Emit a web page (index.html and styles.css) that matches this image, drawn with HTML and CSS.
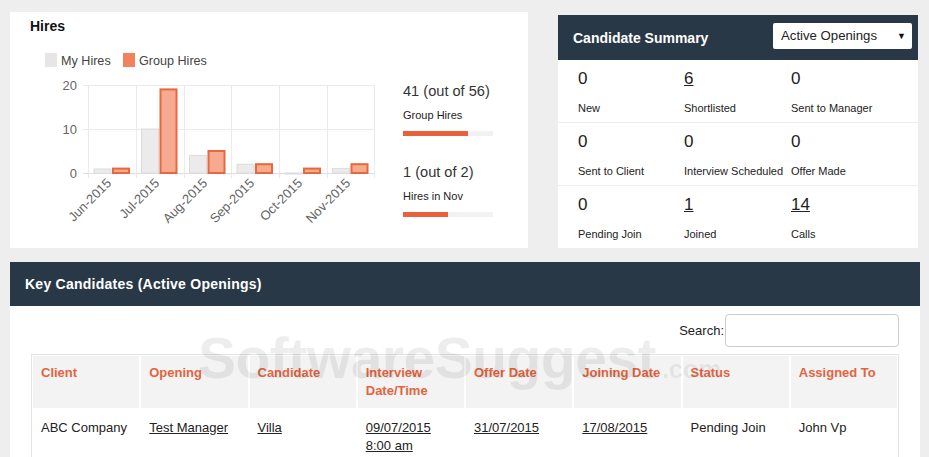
FILE: index.html
```html
<!DOCTYPE html>
<html lang="en">
<head>
<meta charset="utf-8">
<title>Dashboard</title>
<link rel="stylesheet" href="styles.css">
</head>
<body>
<div class="page">
  <div class="top">
    <section class="card hires">
      <h2 class="card-title">Hires</h2>
      <div class="hires-body">
        <svg class="chart" width="360" height="200" viewBox="0 0 360 200" xmlns="http://www.w3.org/2000/svg">
          <!-- legend -->
          <rect x="15" y="9" width="12" height="14" fill="#e6e6e6"/>
          <text x="31" y="21" class="legend">My Hires</text>
          <rect x="93" y="9" width="12" height="14" fill="#f3825c"/>
          <text x="109" y="21" class="legend">Group Hires</text>
          <!-- grid -->
          <g stroke="#ebebeb" stroke-width="1">
            <line x1="53" y1="41.5" x2="345" y2="41.5"/>
            <line x1="53" y1="85.5" x2="345" y2="85.5"/>
            <line x1="58.5" y1="41" x2="58.5" y2="134"/>
            <line x1="106.5" y1="41" x2="106.5" y2="134"/>
            <line x1="154.5" y1="41" x2="154.5" y2="134"/>
            <line x1="201.5" y1="41" x2="201.5" y2="134"/>
            <line x1="249.5" y1="41" x2="249.5" y2="134"/>
            <line x1="297.5" y1="41" x2="297.5" y2="134"/>
            <line x1="344.5" y1="41" x2="344.5" y2="134"/>
          </g>
          <line x1="53" y1="129.5" x2="345" y2="129.5" stroke="#dedede" stroke-width="1"/>
          <!-- y labels -->
          <g class="axis" text-anchor="end">
            <text x="47" y="46">20</text>
            <text x="47" y="90">10</text>
            <text x="47" y="134">0</text>
          </g>
          <!-- bars: my hires -->
          <g fill="#ebebeb" stroke="#dcdcdc" stroke-width="1">
            <rect x="64" y="125" width="17" height="4.4"/>
            <rect x="111.5" y="85" width="17" height="44"/>
            <rect x="159.5" y="111.4" width="17" height="17.6"/>
            <rect x="207" y="120.2" width="17" height="8.8"/>
            <rect x="255" y="129" width="17" height="1"/>
            <rect x="302.5" y="124.6" width="17" height="4.4"/>
          </g>
          <!-- bars: group hires -->
          <g fill="#f6ab90" stroke="#e8673f" stroke-width="2">
            <rect x="83" y="124.6" width="16" height="4.4"/>
            <rect x="130.5" y="45.4" width="16" height="83.6"/>
            <rect x="178.5" y="107" width="16" height="22"/>
            <rect x="226" y="120.2" width="16" height="8.8"/>
            <rect x="274" y="124.6" width="16" height="4.4"/>
            <rect x="321.5" y="120.2" width="16" height="8.8"/>
          </g>
          <!-- x labels -->
          <g class="axis" text-anchor="end">
            <text x="82" y="140" transform="rotate(-45 82 140)">Jun-2015</text>
            <text x="130" y="140" transform="rotate(-45 130 140)">Jul-2015</text>
            <text x="178" y="140" transform="rotate(-45 178 140)">Aug-2015</text>
            <text x="225" y="140" transform="rotate(-45 225 140)">Sep-2015</text>
            <text x="273" y="140" transform="rotate(-45 273 140)">Oct-2015</text>
            <text x="321" y="140" transform="rotate(-45 321 140)">Nov-2015</text>
          </g>
        </svg>
        <div class="stats">
          <div class="stat">
            <div class="stat-num">41 (out of 56)</div>
            <div class="stat-label">Group Hires</div>
            <div class="progress"><span style="width:72%"></span></div>
          </div>
          <div class="stat">
            <div class="stat-num">1 (out of 2)</div>
            <div class="stat-label">Hires in Nov</div>
            <div class="progress"><span style="width:50%"></span></div>
          </div>
        </div>
      </div>
    </section>

    <section class="card summary">
      <header class="panel-head summary-head">
        <h2 class="panel-title">Candidate Summary</h2>
        <div class="select">Active Openings <span class="caret">&#9660;</span></div>
      </header>
      <div class="sum-row">
        <div class="sum-cell"><div class="sum-num">0</div><div class="sum-label">New</div></div>
        <div class="sum-cell"><a class="sum-num link" href="#">6</a><div class="sum-label">Shortlisted</div></div>
        <div class="sum-cell"><div class="sum-num">0</div><div class="sum-label">Sent to Manager</div></div>
      </div>
      <div class="sum-row">
        <div class="sum-cell"><div class="sum-num">0</div><div class="sum-label">Sent to Client</div></div>
        <div class="sum-cell"><div class="sum-num">0</div><div class="sum-label">Interview Scheduled</div></div>
        <div class="sum-cell"><div class="sum-num">0</div><div class="sum-label">Offer Made</div></div>
      </div>
      <div class="sum-row last">
        <div class="sum-cell"><div class="sum-num">0</div><div class="sum-label">Pending Join</div></div>
        <div class="sum-cell"><a class="sum-num link" href="#">1</a><div class="sum-label">Joined</div></div>
        <div class="sum-cell"><a class="sum-num link" href="#">14</a><div class="sum-label">Calls</div></div>
      </div>
    </section>
  </div>

  <section class="card key">
    <header class="panel-head key-head">
      <h2 class="panel-title key-title">Key Candidates (Active Openings)</h2>
    </header>
    <div class="key-body">
      <div class="search"><label for="q">Search:</label><input id="q" type="text"></div>
      <table class="grid">
        <thead>
          <tr>
            <th>Client</th>
            <th>Opening</th>
            <th>Candidate</th>
            <th>Interview Date/Time</th>
            <th>Offer Date</th>
            <th>Joining Date</th>
            <th>Status</th>
            <th>Assigned To</th>
          </tr>
        </thead>
        <tbody>
          <tr>
            <td>ABC Company</td>
            <td><a href="#">Test Manager</a></td>
            <td><a href="#">Villa</a></td>
            <td><a href="#">09/07/2015 8:00 am</a></td>
            <td><a href="#">31/07/2015</a></td>
            <td><a href="#">17/08/2015</a></td>
            <td>Pending Join</td>
            <td>John Vp</td>
          </tr>
        </tbody>
      </table>
    </div>
    <div class="watermark">SoftwareSuggest<span class="wm-dot">.com</span></div>
  </section>
</div>
</body>
</html>
```
FILE: styles.css
```css
* { box-sizing: border-box; }

html, body {
  margin: 0;
  padding: 0;
}

body {
  background: #eeeeee;
  font-family: "Liberation Sans", Arial, sans-serif;
  color: #222;
  font-size: 13px;
  overflow: hidden;
}

.page {
  width: 929px;
  height: 457px;
}

.top {
  display: flex;
  align-items: flex-start;
  gap: 30px;
  padding: 12px 0 0 10px;
}

.card {
  background: #fff;
}

/* Hires */
.hires {
  width: 518px;
  height: 236px;
}

.card-title {
  margin: 0;
  padding: 6px 20px 0;
  font-size: 14px;
  line-height: 16px;
  font-weight: bold;
  color: #111;
}

.hires-body {
  display: flex;
  padding: 10px 0 0 20px;
}

.chart {
  display: block;
  flex: none;
}

.chart .legend {
  font-family: "Liberation Sans", Arial, sans-serif;
  font-size: 12.6px;
  fill: #444;
}

.chart .axis {
  font-family: "Liberation Sans", Arial, sans-serif;
  font-size: 13px;
  fill: #666;
}

.stats {
  margin-left: 13px;
  padding-top: 37px;
  width: 100px;
}

.stat + .stat {
  margin-top: 26px;
}

.stat-num {
  font-size: 14.6px;
  line-height: 20px;
  color: #333;
  white-space: nowrap;
}

.stat-label {
  margin-top: 7px;
  font-size: 11px;
  line-height: 14px;
  color: #222;
}

.progress {
  margin-top: 9px;
  width: 90px;
  height: 5px;
  background: #f2f2f2;
}

.progress span {
  display: block;
  height: 100%;
  background: #e9603a;
}

/* Panel headers */
.panel-head {
  background: #293846;
  color: #fff;
  display: flex;
  align-items: center;
}

.panel-title {
  margin: 0;
  font-size: 14px;
  font-weight: bold;
  line-height: 18px;
  color: #fff;
}

.key-title {
  letter-spacing: 0.25px;
}

/* Candidate summary */
.summary {
  width: 360px;
  height: 233px;
  margin-top: 3px;
}

.summary-head {
  height: 45px;
  padding: 0 6px 0 15px;
  justify-content: space-between;
}

.select {
  width: 139px;
  height: 26px;
  margin-top: -3px;
  background: #fff;
  border-radius: 2px;
  color: #222;
  font-size: 13.2px;
  line-height: 26px;
  padding: 0 6px 0 8px;
  display: flex;
  justify-content: space-between;
}

.caret {
  font-size: 9px;
  color: #111;
}

.sum-row {
  display: grid;
  grid-template-columns: 106px 107px 127px;
  padding: 9px 0 6px 20px;
  height: 63px;
  border-bottom: 1px solid #eeeeee;
}

.sum-row.last {
  border-bottom: none;
  height: 62px;
}

.sum-num {
  display: block;
  font-size: 17px;
  line-height: 20px;
  color: #222;
}

.sum-num.link {
  color: #222;
  text-decoration: underline;
  justify-self: start;
}

.sum-label {
  margin-top: 12px;
  font-size: 11px;
  line-height: 14px;
  color: #222;
  white-space: nowrap;
}

/* Key candidates */
.key {
  position: relative;
  width: 910px;
  height: 195px;
  margin: 14px 0 0 10px;
}

.key-head {
  height: 44px;
  padding-left: 15px;
}

.key-body {
  padding: 8px 21px 0 21px;
}

.search {
  display: flex;
  justify-content: flex-end;
  align-items: center;
  gap: 1px;
  font-size: 13px;
  color: #222;
}

.search input {
  width: 174px;
  height: 33px;
  border: 1px solid #cccccc;
  border-radius: 4px;
  background: #fff;
  font-family: inherit;
}

.grid {
  margin-top: 7px;
  width: 868px;
  table-layout: fixed;
  border-collapse: separate;
  border-spacing: 0;
  border: 1px solid #e4e4e4;
  border-bottom: none;
  font-size: 13px;
}

.grid th {
  background: #f3f3f3;
  border: 1px solid #fff;
  color: #e4643d;
  font-weight: bold;
  text-align: left;
  vertical-align: top;
  padding: 8px 7px 8px 8px;
  line-height: 18px;
  height: 54px;
}

.grid td {
  padding: 10px 8px 13px 9px;
  line-height: 18px;
  vertical-align: top;
  color: #222;
}

.grid td a {
  color: #222;
  text-decoration: underline;
}

.watermark {
  position: absolute;
  left: 188px;
  top: 68px;
  font-size: 57px;
  line-height: 57px;
  font-weight: bold;
  color: rgba(0, 0, 0, 0.07);
  white-space: nowrap;
  pointer-events: none;
  letter-spacing: -0.5px;
}

.wm-dot {
  font-size: 26px;
  margin-left: 6px;
}
```
